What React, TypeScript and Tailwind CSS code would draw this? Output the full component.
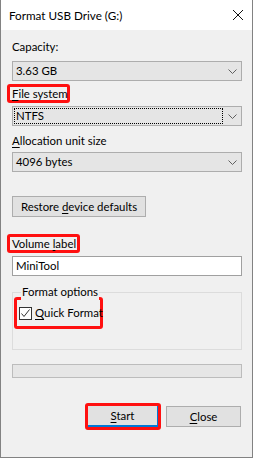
import React from "react";

const font = { fontFamily: "Lato, 'Liberation Sans', sans-serif" };

function Chevron() {
  return (
    <svg width="9" height="5" viewBox="0 0 9 5" className="block">
      <path d="M0.5 0.5 L4.5 4.5 L8.5 0.5" fill="none" stroke="#606060" strokeWidth="1" />
    </svg>
  );
}

function Combo({ text, focused }: { text: string; focused?: boolean }) {
  return (
    <div className="relative flex h-[20px] w-[230px] items-center border border-[#adadad] bg-[#e5e5e5]">
      {focused ? (
        <div className="ml-[1px] flex h-[16px] w-[209px] items-center whitespace-nowrap border border-dotted border-black pl-[1px] leading-[14px] text-black">
          {text}
        </div>
      ) : (
        <div className="whitespace-nowrap pl-[3px] leading-[14px] text-black">{text}</div>
      )}
      <div className="ml-auto mr-[4px]">
        <Chevron />
      </div>
    </div>
  );
}

export default function App() {
  return (
    <div className="h-[459px] w-[254px] bg-white text-[11.4px]" style={font}>
      <div className="flex h-[458px] w-[253px] flex-col border-b border-l border-r border-[#828282]">
        <div className="flex h-[30px] shrink-0 items-center bg-white pl-[8px]">
          <span className="whitespace-nowrap text-[11.7px] leading-[16px] text-black">Format USB Drive (G:)</span>
          <svg width="10" height="10" viewBox="0 0 10 10" className="ml-auto mr-[9px] block">
            <path d="M0 0 L10 10 M10 0 L0 10" stroke="#111" strokeWidth="1" />
          </svg>
        </div>
        <div className="flex flex-1 flex-col items-start bg-[#f0f0f0] pl-[11px] pr-[10px] text-black">
          <div className="mt-[9px] h-[16px] whitespace-nowrap leading-[16px]">Capacity:</div>
          <div className="mt-[6px]">
            <Combo text="3.63 GB" />
          </div>
          <div className="ml-[-5px] mt-[3px] flex h-[19px] w-[63px] shrink-0 items-center whitespace-nowrap rounded-[3px] border-[3px] border-[#ff1010] pl-[2px] leading-[13px]">
            <span>
              <u className="underline-offset-2">F</u>ile system
            </span>
          </div>
          <div className="mt-[3px]">
            <Combo text="NTFS" focused />
          </div>
          <div className="mt-[7px] h-[16px] whitespace-nowrap leading-[16px]">
            <u className="underline-offset-2">A</u>llocation unit size
          </div>
          <div className="mt-[3px]">
            <Combo text="4096 bytes" />
          </div>
          <div className="mt-[24px] flex h-[21px] w-[134px] items-center justify-center whitespace-nowrap border border-[#adadad] bg-[#e1e1e1] leading-[14px]">
            <span>
              Restore <u className="underline-offset-2">d</u>evice defaults
            </span>
          </div>
          <div className="ml-[-5px] mt-[17px] flex h-[19px] w-[73px] shrink-0 items-center whitespace-nowrap rounded-[3px] border-[3px] border-[#ff1010] pl-[2px] leading-[13px]">
            <span>
              Volume <u className="underline-offset-2">l</u>abel
            </span>
          </div>
          <div className="mt-[3px] flex h-[20px] w-[230px] items-center border border-[#a0a0a0] bg-white pl-[3px] leading-[14px]">
            MiniTool
          </div>
          <div className="relative mt-[16px] h-[58px] w-[230px] border border-[#dcdcdc]">
            <span className="absolute left-[8px] top-[-9px] whitespace-nowrap bg-[#f0f0f0] px-[1px] leading-[16px]">Format options</span>
            <div className="ml-[1px] mt-[4px] flex h-[32px] w-[89px] items-center whitespace-nowrap rounded-[3px] border-[3px] border-[#ff1010] pl-[2px]">
              <div className="flex h-[13px] w-[13px] shrink-0 items-center justify-center border border-[#333] bg-white">
                <svg width="11" height="11" viewBox="0 0 11 11" className="block">
                  <path d="M1.5 5.5 L4 8.5 L9.5 1.5" fill="none" stroke="#333" strokeWidth="1" />
                </svg>
              </div>
              <span className="ml-[3px] leading-[14px]">
                <u className="underline-offset-2">Q</u>uick Format
              </span>
            </div>
          </div>
          <div className="mt-[14px] h-[14px] w-[230px] border border-[#bcbcbc] bg-[#e6e6e6]" />
          <div className="mt-[25px] flex w-[230px] items-center justify-end pr-[1px]">
            <div className="flex h-[27px] w-[76px] rounded-[3px] border-[3px] border-[#ff1010]">
              <div className="flex flex-1 items-center justify-center border-b-2 border-r border-[#0078d7] bg-[#e1e1e1] leading-[14px]">
                <span>
                  <u className="underline-offset-2">S</u>tart
                </span>
              </div>
            </div>
            <div className="ml-[5px] flex h-[21px] w-[75px] items-center justify-center border border-[#adadad] bg-[#e1e1e1] leading-[14px]">
              <span>
                <u className="underline-offset-2">C</u>lose
              </span>
            </div>
          </div>
        </div>
      </div>
    </div>
  );
}
